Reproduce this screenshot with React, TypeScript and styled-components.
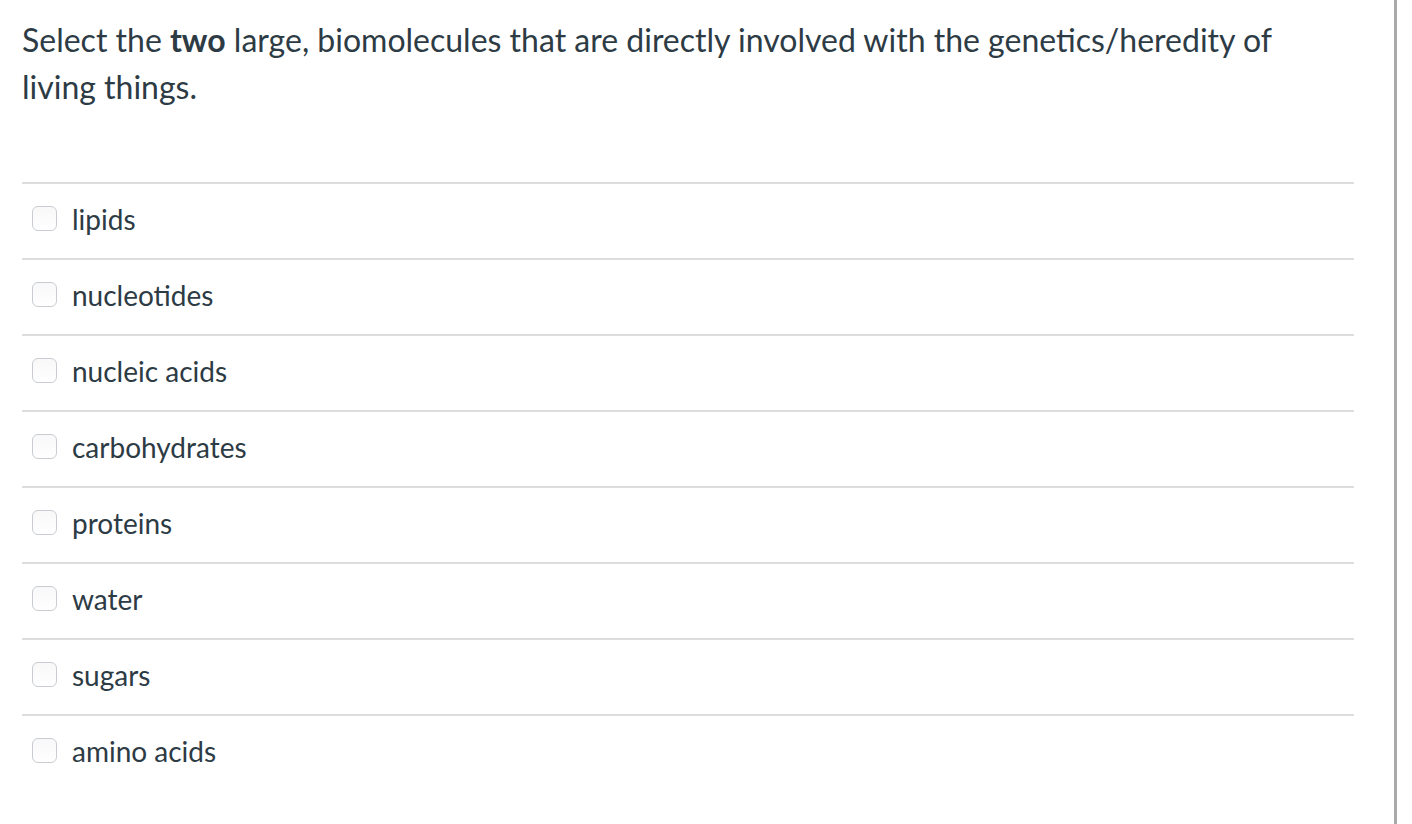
import React from "react";
import styled, { createGlobalStyle } from "styled-components";

const Global = createGlobalStyle`
  html, body { margin: 0; padding: 0; background: #fff; }
  body { font-family: Lato, "Open Sans", sans-serif; color: #2d3b45; }
`;

const Page = styled.div`
  display: flex;
  width: 1412px;
  height: 824px;
  overflow: hidden;
`;

const Main = styled.main`
  width: 1394px;
  box-sizing: border-box;
  padding: 16px 40px 0 22px;
`;

const Divider = styled.div`
  width: 3px;
  background: #aaaaaa;
  flex-shrink: 0;
`;

const Question = styled.p`
  margin: 0;
  max-width: 1290px;
  font-size: 32px;
  line-height: 47px;
  font-weight: 400;
`;

const Answers = styled.div`
  margin-top: 72px;
  display: flex;
  flex-direction: column;
`;

const Row = styled.label`
  display: flex;
  align-items: center;
  gap: 15px;
  height: 76px;
  box-sizing: border-box;
  border-top: 2px solid #dddddd;
  padding: 0 0 5px 10px;
  font-size: 28px;
  cursor: pointer;
`;

const Box = styled.span`
  width: 25px;
  height: 25px;
  box-sizing: border-box;
  border: 1px solid #c9cdd1;
  border-radius: 6px;
  background: linear-gradient(#f8f8f8, #ffffff);
  flex-shrink: 0;
`;

const options = [
  "lipids",
  "nucleotides",
  "nucleic acids",
  "carbohydrates",
  "proteins",
  "water",
  "sugars",
  "amino acids",
];

export default function App() {
  return (
    <Page>
      <Global />
      <Main>
        <Question>
          Select the <strong>two</strong> large, biomolecules that are directly involved with the genetics/heredity of living things.
        </Question>
        <Answers>
          {options.map((o) => (
            <Row key={o}>
              <Box />
              {o}
            </Row>
          ))}
        </Answers>
      </Main>
      <Divider />
    </Page>
  );
}
